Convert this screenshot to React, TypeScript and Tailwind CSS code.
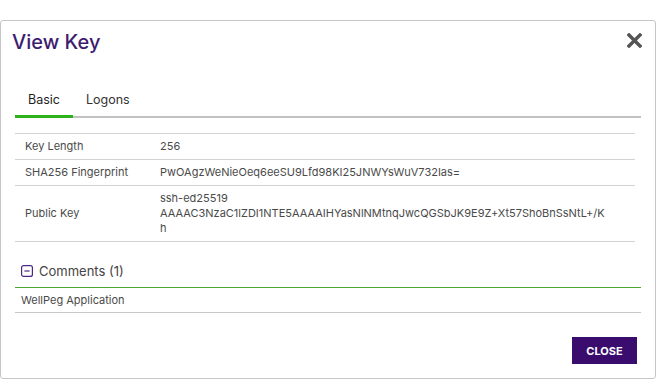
import React from "react";

const rows = [
  { label: "Key Length", value: ["256"] },
  { label: "SHA256 Fingerprint", value: ["PwOAgzWeNieOeq6eeSU9Lfd98KI25JNWYsWuV732Ias="] },
  {
    label: "Public Key",
    value: [
      "ssh-ed25519",
      "AAAAC3NzaC1lZDI1NTE5AAAAIHYasNlNMtnqJwcQGSbJK9E9Z+Xt57ShoBnSsNtL+/K",
      "h",
    ],
  },
];

export default function App() {
  return (
    <div
      className="w-[657px] h-[379px] bg-white pt-[20px]"
      style={{ fontFamily: "Inter, 'Liberation Sans', sans-serif" }}
    >
      <div className="w-[656px] h-[359px] border border-[#c6c6c6] rounded-[3px] flex flex-col">
        {/* Header */}
        <div className="flex justify-between items-start pt-[9px] pl-[11px] pr-[13px]">
          <h1 className="text-[20px] leading-[24px] text-[#3d1c70] font-medium">
            View Key
          </h1>
          <button className="mt-[3px] w-[15px] h-[15px] flex items-center justify-center" aria-label="Close">
            <svg width="15" height="15" viewBox="0 0 15 15">
              <path
                d="M2 2 L13 13 M13 2 L2 13"
                stroke="#555555"
                strokeWidth="3.4"
                strokeLinecap="square"
                fill="none"
              />
            </svg>
          </button>
        </div>

        {/* Tabs */}
        <div className="mt-[30px] mx-[14px] flex border-b-2 border-[#c2c2c2]">
          <div className="-mb-[2px] px-[13px] pt-[8px] pb-[7px] border-b-[3px] border-[#2bb319] text-[12.5px] leading-[16px] text-[#1e1e1e]">
            Basic
          </div>
          <div className="-mb-[2px] px-[13px] pt-[8px] pb-[7px] border-b-[3px] border-transparent text-[12.5px] leading-[16px] text-[#333333]">
            Logons
          </div>
        </div>

        {/* Table */}
        <div className="mt-[15px] ml-[14px] mr-[20px] border-t border-[#d2d2d2] text-[11px] leading-[15px] text-[#4a4a4a]">
          {rows.map((r) => (
            <div
              key={r.label}
              className={
                "flex items-center border-b border-[#d2d2d2] " +
                (r.value.length > 1 ? "py-[5px]" : "h-[26px]")
              }
            >
              <div className="w-[145px] pl-[10px] shrink-0">{r.label}</div>
              <div className="flex flex-col">
                {r.value.map((v, i) => (
                  <span key={i} className="whitespace-nowrap">
                    {v}
                  </span>
                ))}
              </div>
            </div>
          ))}
        </div>

        {/* Comments */}
        <div className="mt-[21px] mx-[14px]">
          <div className="flex items-center gap-[6px] pl-[6px] pb-[8px] border-b border-[#4aa832]">
            <svg width="12" height="12" viewBox="0 0 12 12">
              <rect x="0.6" y="0.6" width="10.8" height="10.8" rx="2" fill="none" stroke="#4b2a86" strokeWidth="1.2" />
              <path d="M3.4 6 H8.6" stroke="#4b2a86" strokeWidth="1.2" />
            </svg>
            <span className="text-[13px] leading-[16px] text-[#444444]">Comments (1)</span>
          </div>
          <div className="h-[25px] flex items-center pl-[6px] border-b border-[#c8c8c8] text-[11px] leading-[15px] text-[#4a4a4a]">
            WellPeg Application
          </div>
        </div>

        {/* Footer */}
        <div className="mt-auto flex justify-end pr-[18px] pb-[14px]">
          <button className="w-[65px] h-[27px] bg-[#3a0c6e] text-white text-[11px] font-bold leading-[14px] flex items-center justify-center">
            CLOSE
          </button>
        </div>
      </div>
    </div>
  );
}
